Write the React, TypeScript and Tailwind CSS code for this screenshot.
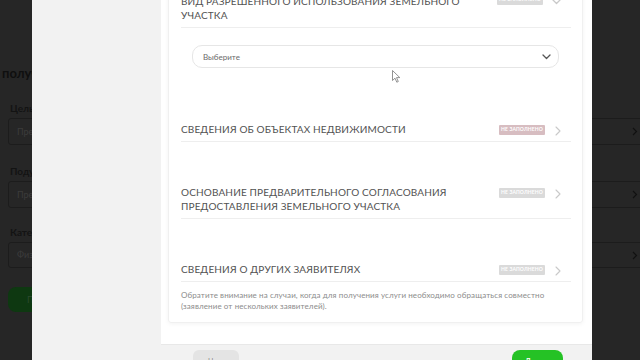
import React from "react";

const font = { fontFamily: "Lato, 'Open Sans', sans-serif" };

function ChevronRight() {
  return (
    <svg width="6" height="10" viewBox="0 0 6 10" fill="none">
      <path d="M1 1l4 4-4 4" stroke="#c9c9c9" strokeWidth="1.1" strokeLinecap="round" strokeLinejoin="round" />
    </svg>
  );
}

function ChevronDown({ color = "#c9c9c9", w = 9 }: { color?: string; w?: number }) {
  return (
    <svg width={w} height="6" viewBox="0 0 9 6" fill="none">
      <path d="M1 1l3.5 3.5L8 1" stroke={color} strokeWidth="1.3" strokeLinecap="round" strokeLinejoin="round" />
    </svg>
  );
}

function Badge({ pink }: { pink?: boolean }) {
  return (
    <span
      className={`flex h-[10px] w-[46px] items-center justify-center rounded-[1px] text-[5px] font-bold uppercase tracking-wide text-white ${
        pink ? "bg-[#d7bdc1]" : "bg-[#dadada]"
      }`}
    >
      Не заполнено
    </span>
  );
}

function Section({
  title,
  pink,
  open,
  className = "",
}: {
  title: React.ReactNode;
  pink?: boolean;
  open?: boolean;
  className?: string;
}) {
  return (
    <div className={`flex items-start justify-between border-b border-[#eeeeee] pb-[5px] ${className}`}>
      <div className="w-[300px] text-[10px] uppercase leading-[14px] tracking-[0.15px] text-[#525252]">{title}</div>
      <div className="mr-[10px] mt-[1px] flex items-center">
        <Badge pink={pink} />
        <div className={open ? "ml-[9px] mt-[4px]" : "ml-[10px] mt-[3px]"}>
          {open ? <ChevronDown /> : <ChevronRight />}
        </div>
      </div>
    </div>
  );
}

function BackgroundPage() {
  return (
    <div className="h-[360px] w-[660px] bg-[#262626] pl-[8px] pt-[65px]" style={{ fontFamily: "Lato, sans-serif" }}>
      <div className="-ml-[6px] text-[13px] font-bold leading-[16px] text-[#0f0f0f]">получения услуги</div>
      {[
        { label: "Цель обращения", value: "Предварительное согласование предоставления земельного участка", mt: "mt-[21px]", h: "h-[27px]" },
        { label: "Подуслуга", value: "Предварительное согласование", mt: "mt-[20px]", h: "h-[27px]" },
        { label: "Категория заявителя", value: "Физическое лицо", mt: "mt-[18px]", h: "h-[26px]" },
      ].map((f) => (
        <div key={f.label} className={f.mt}>
          <div className="pl-[2px] text-[10px] font-bold leading-[12px] text-[#131313]">{f.label}</div>
          <div
            className={`mt-[4px] flex w-[644px] items-center justify-between rounded-[3px] border border-[#1c1c1c] pl-[8px] pr-[13px] ${f.h}`}
          >
            <span className="text-[9px] text-[#3c3c3c]">{f.value}</span>
            <svg width="6" height="9" viewBox="0 0 6 9" fill="none">
              <path d="M1 1l3.5 3.5L1 8" stroke="#111" strokeWidth="1.2" />
            </svg>
          </div>
        </div>
      ))}
      <div className="mt-[19px] flex h-[25px] w-[110px] items-center rounded-lg bg-[#0e3811] pl-[19px] text-[9px] text-[#2c4a2e]">
        Продолжить
      </div>
    </div>
  );
}

export default function App() {
  return (
    <div className="relative h-[360px] w-[640px] overflow-hidden bg-[#262626]">
      <BackgroundPage />

      {/* modal */}
      <div className="absolute left-[32px] top-0 flex h-[360px] w-[560px]" style={font}>
        <div className="w-[129px] shrink-0 bg-[#f2f2f2]" />
        <div className="flex flex-1 flex-col bg-white">
          <div className="h-[344px] shrink-0 overflow-hidden pl-[7px] pr-[9px]">
            <div className="-mt-[20px] rounded-[3px] border border-[#f0f0f0] pb-[10px] pl-[12px] pr-[11px] pt-[13px] shadow-[0_1px_4px_rgba(0,0,0,0.05)]">
              <Section open title="Вид разрешенного использования земельного участка" />
              <div className="ml-[11px] mr-[12px] mt-[17px] flex h-[23px] items-center justify-between rounded-[10px] border border-[#e6e6e6] pl-[10px] pr-[7px]">
                <span className="text-[8px] text-[#6a6a6a]">Выберите</span>
                <ChevronDown color="#555555" />
              </div>
              <Section pink className="mt-[54px]" title="Сведения об объектах недвижимости" />
              <Section className="mt-[43px]" title="Основание предварительного согласования предоставления земельного участка" />
              <Section className="mt-[43px]" title="Сведения о других заявителях" />
              <p className="mt-[8px] text-[8px] leading-[11px] tracking-[0.1px] text-[#8c8c8c]">
                Обратите внимание на случаи, когда для получения услуги необходимо обращаться совместно (заявление от
                нескольких заявителей).
              </p>
            </div>
          </div>
          <div className="flex flex-1 items-start justify-between overflow-hidden border-t border-[#e8e8e8] bg-[#f2f2f2] pl-[32px] pr-[29px] pt-[5px]">
            <div className="flex h-[22px] w-[46px] items-center justify-center rounded-md bg-[#e4e4e4] text-[7px] text-[#8a8a8a]">
              ‹ Назад
            </div>
            <div className="flex h-[22px] w-[51px] items-center justify-center rounded-lg bg-[#25c225] text-[7px] font-bold text-white">
              Далее ›
            </div>
          </div>
        </div>
      </div>

      {/* mouse cursor */}
      <svg className="absolute left-[392px] top-[70px]" width="9" height="13" viewBox="0 0 9 13" fill="none">
        <path d="M0.5 0.5v10l2.5-2.3 1.8 4 1.5-.7-1.8-3.9h3.3z" fill="#fff" stroke="#777" strokeWidth="0.8" strokeLinejoin="round" />
      </svg>
    </div>
  );
}
